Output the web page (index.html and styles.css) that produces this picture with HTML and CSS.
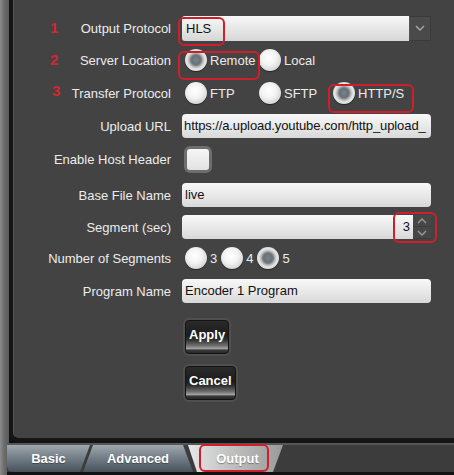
FILE: index.html
```html
<!DOCTYPE html>
<html>
<head>
<meta charset="utf-8">
<link rel="stylesheet" href="styles.css">
</head>
<body>
<div class="window">
  <div class="rail"></div>
  <div class="main">
    <div class="panel">
      <div class="form">
        <div class="label"><span class="num">1</span>Output Protocol</div>
        <div class="ctrl">
          <div class="select">
            <div class="select-value">HLS</div>
            <div class="select-btn"><svg width="10" height="6" viewBox="0 0 10 6"><polyline points="1,1 5,5 9,1" fill="none" stroke="#a8a8a8" stroke-width="1.4"/></svg></div>
          </div>
          <span class="mark mark-hls"></span>
        </div>

        <div class="label"><span class="num">2</span>Server Location</div>
        <div class="ctrl">
          <div class="radios">
            <div class="opt"><span class="radio on"></span>Remote</div>
            <div class="opt"><span class="radio"></span>Local</div>
          </div>
          <span class="mark mark-remote"></span>
        </div>

        <div class="label"><span class="num num3">3</span>Transfer Protocol</div>
        <div class="ctrl">
          <div class="radios">
            <div class="opt"><span class="radio"></span>FTP</div>
            <div class="opt"><span class="radio"></span>SFTP</div>
            <div class="opt"><span class="radio on"></span>HTTP/S</div>
          </div>
          <span class="mark mark-http"></span>
        </div>

        <div class="label">Upload URL</div>
        <div class="ctrl"><div class="field url">https://a.upload.youtube.com/http_upload_</div></div>

        <div class="label">Enable Host Header</div>
        <div class="ctrl"><span class="check"></span></div>

        <div class="label">Base File Name</div>
        <div class="ctrl"><div class="field">live</div></div>

        <div class="label">Segment (sec)</div>
        <div class="ctrl">
          <div class="spin-row">
            <div class="field num-field">3</div>
            <div class="spinner">
              <span class="spin-btn"><svg width="10" height="6" viewBox="0 0 10 6"><polyline points="1,5 5,1 9,5" fill="none" stroke="#9a9a9a" stroke-width="1.4"/></svg></span>
              <span class="spin-btn"><svg width="10" height="6" viewBox="0 0 10 6"><polyline points="1,1 5,5 9,1" fill="none" stroke="#9a9a9a" stroke-width="1.4"/></svg></span>
            </div>
          </div>
          <span class="mark mark-seg"></span>
        </div>

        <div class="label">Number of Segments</div>
        <div class="ctrl">
          <div class="seg-radios">
            <div class="opt"><span class="radio"></span>3</div>
            <div class="opt"><span class="radio"></span>4</div>
            <div class="opt"><span class="radio on"></span>5</div>
          </div>
        </div>

        <div class="label">Program Name</div>
        <div class="ctrl"><div class="field">Encoder 1 Program</div></div>

        <div class="actions">
          <button class="btn">Apply</button>
          <button class="btn">Cancel</button>
        </div>
      </div>
    </div>
    <div class="tabbar">
      <div class="tab tab-basic">Basic</div>
      <div class="tab tab-adv">Advanced</div>
      <div class="tab-wrap">
        <div class="tab tab-out">Output</div>
        <span class="mark mark-tab"></span>
      </div>
    </div>
  </div>
</div>
</body>
</html>
```

FILE: styles.css
```css
body {
  margin: 0;
  background: #111;
  font-family: "Liberation Sans", Arial, sans-serif;
  font-size: 13px;
}

.window {
  display: flex;
  width: 454px;
  height: 475px;
  overflow: hidden;
}

.rail {
  flex: none;
  width: 9px;
  background: linear-gradient(to right, #8c8c8c, #6c6c6c 45%, #5a5a5a);
}

.main {
  flex: 1;
  display: flex;
  flex-direction: column;
  min-width: 0;
}

.panel {
  flex: 1;
  background: #434343;
  border-left: 4px solid #151515;
  border-bottom: 5px solid #151515;
  border-bottom-left-radius: 10px;
  box-shadow: inset 1px 0 0 #555;
  padding: 12px 0 0 27px;
}

.form {
  display: grid;
  grid-template-columns: 131px 249px;
  column-gap: 11px;
  grid-template-rows: 32px 32px 34px 32px 34px 38px 26px 36px 30px auto;
  align-items: center;
}

.label {
  position: relative;
  text-align: right;
  color: #ececec;
  white-space: nowrap;
}

.num {
  position: absolute;
  left: 10px;
  top: 50%;
  transform: translateY(-52%);
  color: #d52630;
  font-weight: bold;
  font-size: 15px;
}

.num3 {
  left: 12px;
  transform: translateY(-62%);
}

.ctrl {
  position: relative;
  color: #ececec;
}

.mark {
  position: absolute;
  box-sizing: border-box;
  border: 2px solid #d01f2c;
  border-radius: 6px;
  pointer-events: none;
}

.mark-hls { left: -4px; top: 1px; width: 47px; height: 29px; }
.mark-remote { left: -4px; top: 2px; width: 82px; height: 29px; }
.mark-http { left: 146px; top: 2px; width: 86px; height: 29px; }
.mark-seg { left: 211px; top: -3px; width: 44px; height: 31px; }
.mark-tab { left: 11px; top: -1px; width: 70px; height: 28px; }

/* select */
.select {
  display: flex;
  height: 25px;
}

.select-value {
  flex: 1;
  background: linear-gradient(#f8f8f8, #e4e4e4 60%, #d6d6d6);
  border-radius: 3px 0 0 3px;
  color: #111;
  padding-left: 4px;
  line-height: 25px;
}

.select-btn {
  width: 22px;
  box-sizing: border-box;
  background: #4a4a4a;
  border: 1px solid #3a3a3a;
  border-left: 1px solid #555;
  display: flex;
  align-items: center;
  justify-content: center;
}

/* radios */
.radios {
  display: grid;
  grid-template-columns: repeat(3, 74px);
  padding-left: 3px;
}

.opt {
  display: flex;
  align-items: center;
  gap: 3px;
  color: #ececec;
}

.seg-radios {
  display: flex;
  gap: 4px;
  padding-left: 3px;
}

.radio {
  flex: none;
  width: 22px;
  height: 22px;
  border-radius: 50%;
  background: radial-gradient(circle at 45% 40%, #ffffff 0%, #f3f3f3 40%, #d4d4d4 75%, #b4b4b4 100%);
  box-shadow: 0 1px 1px rgba(0, 0, 0, 0.45);
}

.radio.on {
  background: radial-gradient(circle at 50% 50%, #7a838a 0%, #687178 28%, #7f868a 36%, #b4b4b4 44%, #e4e4e4 58%, #d8d8d8 80%, #b0b0b0 100%);
}

/* inputs */
.field {
  height: 24px;
  box-sizing: border-box;
  background: linear-gradient(#f8f8f8, #e6e6e6 60%, #d8d8d8);
  border-radius: 4px;
  color: #111;
  padding-left: 3px;
  line-height: 24px;
  white-space: nowrap;
  overflow: hidden;
}

.url {
  padding-left: 2px;
  letter-spacing: -0.1px;
}

.check {
  display: block;
  margin-left: 2px;
  width: 28px;
  height: 27px;
  box-sizing: border-box;
  border: 3px solid #6e6e6e;
  border-radius: 6px;
  background: linear-gradient(#f6f6f6, #e2e2e2);
}

.spin-row {
  display: flex;
  height: 24px;
  width: 249px;
}

.num-field {
  flex: 1;
  text-align: right;
  padding-right: 3px;
  border-radius: 4px 0 0 4px;
}

.spinner {
  width: 18px;
  display: flex;
  flex-direction: column;
  background: #474747;
}

.spin-btn {
  flex: 1;
  display: flex;
  align-items: center;
  justify-content: center;
  border-bottom: 1px solid #3c3c3c;
}

/* buttons */
.actions {
  grid-column: 2;
  align-self: start;
  display: flex;
  flex-direction: column;
  align-items: flex-start;
  gap: 12px;
  padding: 14px 0 0 3px;
}

.btn {
  height: 34px;
  padding: 0 3px 6px;
  font-family: "Liberation Sans", Arial, sans-serif;
  font-size: 13px;
  font-weight: bold;
  color: #fff;
  border: 1px solid #141414;
  border-radius: 4px;
  background: linear-gradient(#2a2a2a 0%, #1c1c1c 45%, #2e2e2e 58%, #6a6a6a 76%, #a0a0a0 86%, #3a3a3a 91%, #262626 100%);
  box-shadow: 0 0 0 2px #4f4f4f;
}

/* tabs */
.tabbar {
  flex: none;
  height: 32px;
  box-sizing: border-box;
  margin-left: -2px;
  border-top: 2px solid #565656;
  border-bottom: 3px solid #121212;
  background: #3c3c3c;
  display: flex;
}

.tab {
  height: 27px;
  box-sizing: border-box;
  display: flex;
  align-items: center;
  justify-content: center;
  color: #fff;
  font-weight: bold;
  font-size: 13px;
  background: linear-gradient(#a0a8ae 0%, #76808a 45%, #48525b 100%);
  text-shadow: 0 1px 1px rgba(0, 0, 0, 0.35);
}

.tab-basic {
  width: 83px;
  border-bottom-left-radius: 6px;
  clip-path: polygon(0 0, 100% 0, calc(100% - 10px) 100%, 0 100%);
}

.tab-adv {
  width: 110px;
  margin-left: -7px;
  clip-path: polygon(10px 0, calc(100% - 10px) 0, 100% 100%, 0 100%);
}

.tab-wrap {
  position: relative;
  margin-left: -5px;
}

.tab-out {
  width: 95px;
  padding-left: 4px;
  background: linear-gradient(to right, #e8e8e8 0%, #c4c4c4 40%, #9a9a9a 100%);
  clip-path: polygon(0 0, 100% 0, calc(100% - 10px) 100%, 9px 100%);
}
```
